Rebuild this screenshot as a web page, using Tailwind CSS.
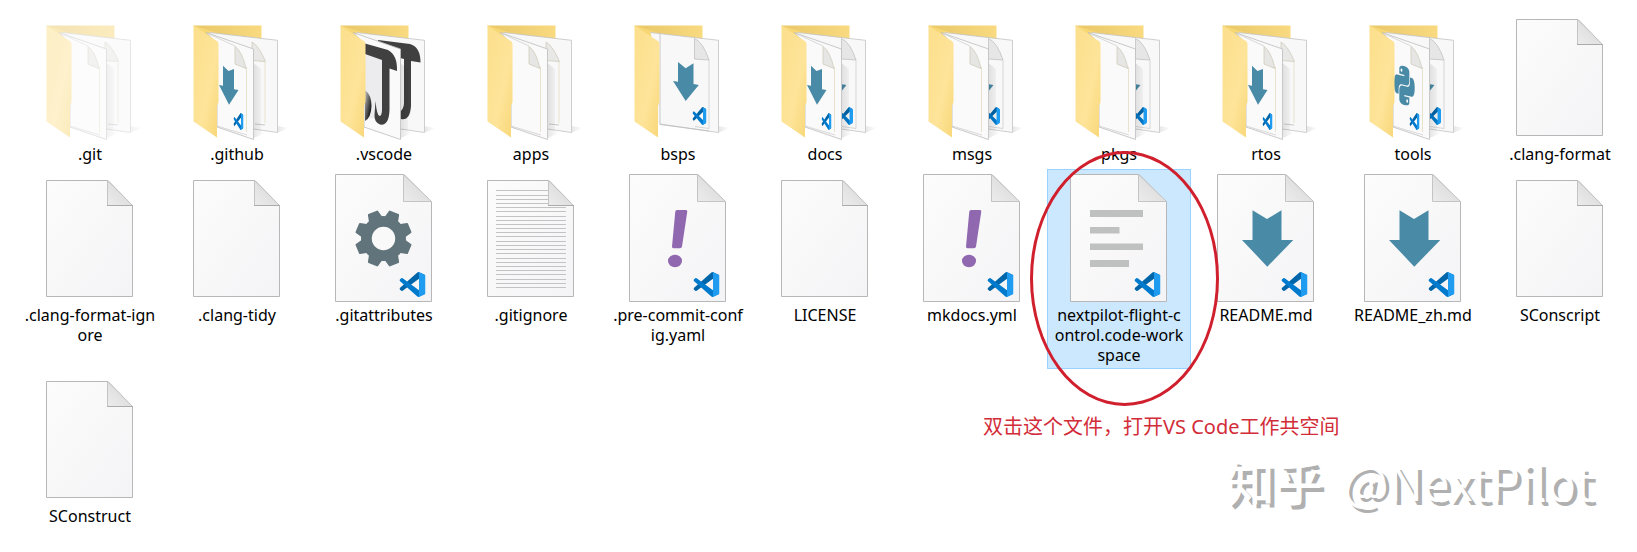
<!DOCTYPE html>
<html lang="zh-CN">
<head>
<meta charset="utf-8">
<title>nextpilot-flight-control</title>
<script src="https://cdn.jsdelivr.net/npm/@tailwindcss/browser@4"></script>
</head>
<body class="bg-white">
<svg class="absolute size-0" aria-hidden="true">
  <defs>
    <linearGradient id="paper" x1="0" y1="0" x2="1" y2="1"><stop offset="0" stop-color="#fcfcfc"/><stop offset="1" stop-color="#f4f4f6"/></linearGradient>
    <linearGradient id="curl" x1="0" y1="1" x2="0.6" y2="0.4"><stop offset="0" stop-color="#ececec"/><stop offset="1" stop-color="#dedede"/></linearGradient>
    <linearGradient id="cover" x1="0" y1="0" x2="1" y2="1"><stop offset="0" stop-color="#fbdf8c"/><stop offset="0.6" stop-color="#fee499"/><stop offset="1" stop-color="#f8d778"/></linearGradient>
    <linearGradient id="backcover" x1="0" y1="0" x2="1" y2="0"><stop offset="0" stop-color="#e9c768"/><stop offset="1" stop-color="#f9da80"/></linearGradient>
    <linearGradient id="shade" x1="0" y1="0" x2="1" y2="0"><stop offset="0" stop-color="#000" stop-opacity=".1"/><stop offset="1" stop-color="#000" stop-opacity="0"/></linearGradient>
    <linearGradient id="sphere" x1="0" y1="0" x2="1" y2="1"><stop offset="0" stop-color="#c9c9c9"/><stop offset="0.5" stop-color="#555"/><stop offset="0.8" stop-color="#111"/></linearGradient>
    <clipPath id="backclip"><path d="M81 20H105V120H81Z"/></clipPath>

    <symbol id="vs" viewBox="0 0 100 100" preserveAspectRatio="none">
      <path fill="#0065a9" d="M96.46 10.8 75.86.88a6.23 6.23 0 0 0-7.11 1.2L1.3 63.58a4.17 4.17 0 0 0 0 6.17l5.51 5a4.17 4.17 0 0 0 5.32.24L93.36 13.37c2.73-2.07 6.64-.12 6.64 3.3v-.24a6.25 6.25 0 0 0-3.54-5.63Z"/>
      <path fill="#007acc" d="m96.46 89.2-20.6 9.92a6.23 6.23 0 0 1-7.11-1.2L1.3 36.42a4.17 4.17 0 0 1 0-6.17l5.51-5a4.17 4.17 0 0 1 5.32-.24l81.23 61.62c2.73 2.07 6.64.12 6.64-3.3v.24a6.25 6.25 0 0 1-3.54 5.63Z"/>
      <path fill="#1f9cf0" d="M75.86 99.13a6.23 6.23 0 0 1-7.11-1.21c2.31 2.3 6.25.67 6.25-2.59V4.67c0-3.26-3.94-4.9-6.25-2.59a6.23 6.23 0 0 1 7.11-1.21l20.6 9.91A6.25 6.25 0 0 1 100 16.41v67.18a6.25 6.25 0 0 1-3.54 5.63l-20.6 9.91Z"/>
    </symbol>

    <symbol id="doc" viewBox="0 0 128 128">
      <path fill="url(#paper)" stroke="#b7b7b7" d="M20.500 6.500H82L106.500 31.500V122.500H20.500Z"/>
      <path fill="url(#curl)" stroke="#c4c4c4" d="M81.500 6.500V31.500H106.500Z"/>
      <path stroke="#ababab" d="M81 31.500H107"/>
    </symbol>
    <symbol id="bigdoc" viewBox="0 0 128 128">
      <path fill="url(#paper)" stroke="#b7b7b7" d="M15.500 .5H84L111.500 28V127.500H15.500Z"/>
      <path fill="url(#curl)" stroke="#c4c4c4" d="M83.500 .5V27.500H111.500Z"/>
      <use href="#vs" x="79.500" y="98" width="26" height="25"/>
    </symbol>
    <symbol id="down" viewBox="0 0 128 128"><path fill="#498ba7" d="M50.500 36.300 65 45 79.500 36.300V66H91.300L65.300 92.700 40 66H50.500Z"/></symbol>
    <symbol id="bang" viewBox="0 0 128 128">
      <path fill="#9068b0" d="M63 36H72Q73.500 36 73.300 37.500L68 72.500Q67.700 74.300 66 74.300H59.500Q57.800 74.300 58 72.500L61.300 37.500Q61.500 36 63 36Z"/>
      <ellipse cx="61" cy="87" rx="7" ry="6.200" fill="#9068b0"/>
    </symbol>

    <symbol id="fback" viewBox="0 0 128 128">
      <path fill="url(#shade)" d="M104 113 116 115 105 119.500Z"/>
      <path fill="url(#backcover)" d="M20.500 12.500H88.500V30L38 24Z"/>
      <path fill="#f7d774" d="M20.500 12.500 48 21V60H30Z"/>
      <path fill="#f8f8f9" d="M36.500 19.500 104.500 27.300V119.500L44 111V60Z"/>
      <path fill="none" stroke="#c3c3c3" stroke-width=".8" d="M36.500 19.500 104.500 27.300V119.500L46 111"/>
    </symbol>
    <symbol id="ffront" viewBox="0 0 128 128">
      <path fill="url(#shade)" d="M80.500 50 88 56V118L92 120 81 125Z"/>
      <path fill="#fafafb" stroke="#bcbcbc" stroke-width=".8" d="M33 19.500 80.500 36V126.500L44 114V30Z"/>
    </symbol>
    <symbol id="fcover" viewBox="0 0 128 128"><path fill="url(#cover)" d="M20.500 12.500 44.500 28.500Q45.500 29.500 45.500 31V89L44 93V124.500L20.500 108.500Z"/></symbol>
    <symbol id="fdoc" viewBox="0 0 128 128">
      <path fill="none" stroke="#cfcfcf" stroke-width=".8" d="M36 21 62 33M44 113 74 122"/>
      <path fill="none" stroke="#e3dcc0" stroke-width=".8" d="M73.500 54V119"/>
      <path fill="#e6e6e4" stroke="#cfcbbb" stroke-width=".8" d="M62 33.500V51L73 55.500Q69 38 62 33.500Z"/>
    </symbol>
    <symbol id="bdoc" viewBox="0 0 128 128">
      <path fill="none" stroke="#cdcdcd" stroke-width=".8" d="M95 47V115.500L81 113.500"/>
      <path fill="#e6e6e6" stroke="#c2c2c2" stroke-width=".8" d="M80.500 25.500V46L95 47Q89 29 80.500 25.500Z"/>
    </symbol>
    <symbol id="bplain" viewBox="0 0 128 128">
      <path fill="none" stroke="#e3dcc0" stroke-width=".8" d="M92 49V110"/>
      <path fill="#e8e8e6" stroke="#cfcbbb" stroke-width=".8" d="M79 29V47.500L92.500 48.500Q86 33 79 29Z"/>
      <path stroke="#bdbdbd" stroke-width=".8" d="M82 111 92 112"/>
    </symbol>
    <symbol id="bmd" viewBox="0 0 128 128">
      <use href="#bdoc"/>
      <g clip-path="url(#backclip)"><path fill="#498ba7" d="M79 71 85.500 72 79 80Z"/><use href="#vs" x="78" y="94" width="14" height="18"/></g>
    </symbol>
    <symbol id="fmd" viewBox="0 0 128 128">
      <use href="#fdoc"/>
      <path fill="#498ba7" d="M50 52.700 55.500 58 61 56V76.300L65.500 77 56 91.700 46 72 50 72.700Z"/>
      <use href="#vs" x="60.500" y="100" width="10" height="17"/>
    </symbol>
    <path id="snake" d="M14.250.18l.9.2.73.26.59.3.45.32.34.34.25.34.16.33.1.3.04.26.02.2-.01.13V8.500l-.05.63-.13.550-.21.46-.26.38-.3.31-.33.250-.35.19-.35.14-.33.1-.3.07-.26.04-.21.02H8.770l-.69.05-.59.14-.5.22-.41.27-.33.32-.27.350-.2.36-.15.370-.1.350-.07.32-.04.27-.02.21v3.060H3.170l-.21-.03-.28-.07-.32-.12-.35-.18-.36-.26-.36-.36-.35-.46-.32-.59-.28-.73-.21-.88-.14-1.050-.05-1.230.06-1.220.16-1.040.24-.87.32-.71.36-.57.4-.44.42-.33.42-.24.4-.16.36-.1.32-.05.24-.01h8.380v-.83H6.180l-.01-2.750-.02-.37.05-.34.11-.31.17-.28.250-.26.31-.23.38-.2.44-.18.51-.15.580-.12.64-.1.71-.06.77-.04.84-.02 1.270.05zm-6.300 1.980-.23.33-.08.41.08.41.23.34.33.22.41.09.41-.09.33-.22.23-.34.08-.41-.08-.41-.23-.33-.33-.22-.41-.09-.41.09z"/>
  </defs>
</svg>

<main class="grid grid-cols-11 items-start gap-y-px pt-2 pl-4 pr-1 font-['Noto_Sans','Noto_Sans_CJK_SC',sans-serif] text-base leading-5 text-black">
  <button class="ml-0.5 mr-px flex flex-col items-center gap-[3px] border border-transparent pt-1 pb-[3px]">
    <svg class="size-32 opacity-50" viewBox="0 0 128 128"><use href="#fback"/><use href="#bplain"/><use href="#ffront"/><use href="#fdoc"/><use href="#fcover"/></svg><span>.git</span>
  </button>
  <button class="ml-0.5 mr-px flex flex-col items-center gap-[3px] border border-transparent pt-1 pb-[3px]">
    <svg class="size-32" viewBox="0 0 128 128"><use href="#fback"/><use href="#bplain"/><use href="#ffront"/><use href="#fmd"/><use href="#fcover"/></svg><span>.github</span>
  </button>
  <button class="ml-0.5 mr-px flex flex-col items-center gap-[3px] border border-transparent pt-1 pb-[3px]">
    <svg class="size-32" viewBox="0 0 128 128"><use href="#fback"/>
      <path fill="#404040" d="M58 27 90 31Q100.500 34 100.500 49.500L91 48V93Q90 108 81 106Q78 105 78 100 84 97 84 90V46L60 40Z"/>
      <use href="#ffront"/>
      <path fill="#ececee" d="M45 41 62 46V104L45 106Z"/>
      <path fill="#404040" d="M45 30.500 68 37Q77.500 42 77 58L69.500 55.500V97Q69 113 60 111.500 54 109 54.500 102L55.500 88Q57 104 60 103 62 102 62 96V47L45 41Z"/>
      <path fill="url(#sphere)" d="M45 77Q51.500 82 51.500 93 51 105 45 108Z"/>
      <use href="#fcover"/></svg><span>.vscode</span>
  </button>
  <button class="ml-0.5 mr-px flex flex-col items-center gap-[3px] border border-transparent pt-1 pb-[3px]">
    <svg class="size-32" viewBox="0 0 128 128"><use href="#fback"/><use href="#bplain"/><use href="#ffront"/><use href="#fdoc"/><use href="#fcover"/></svg><span>apps</span>
  </button>
  <button class="ml-0.5 mr-px flex flex-col items-center gap-[3px] border border-transparent pt-1 pb-[3px]">
    <svg class="size-32" viewBox="0 0 128 128"><use href="#fback"/>
      <path fill="none" stroke="#bdbdbd" stroke-width=".8" d="M46 20.500V111.500L95 118"/>
      <use href="#bdoc"/>
      <path fill="#498ba7" d="M64 49 71.700 55.300 79.500 50.300V71L84.800 72 71.700 88 59 68 64 68.700Z"/>
      <use href="#vs" x="78.500" y="94" width="14" height="18"/>
      <use href="#fcover"/></svg><span>bsps</span>
  </button>
  <button class="ml-0.5 mr-px flex flex-col items-center gap-[3px] border border-transparent pt-1 pb-[3px]">
    <svg class="size-32" viewBox="0 0 128 128"><use href="#fback"/><use href="#bmd"/><use href="#ffront"/><use href="#fmd"/><use href="#fcover"/></svg><span>docs</span>
  </button>
  <button class="ml-0.5 mr-px flex flex-col items-center gap-[3px] border border-transparent pt-1 pb-[3px]">
    <svg class="size-32" viewBox="0 0 128 128"><use href="#fback"/><use href="#bmd"/><use href="#ffront"/><use href="#fdoc"/><use href="#fcover"/></svg><span>msgs</span>
  </button>
  <button class="ml-0.5 mr-px flex flex-col items-center gap-[3px] border border-transparent pt-1 pb-[3px]">
    <svg class="size-32" viewBox="0 0 128 128"><use href="#fback"/><use href="#bmd"/><use href="#ffront"/><use href="#fdoc"/><use href="#fcover"/></svg><span>pkgs</span>
  </button>
  <button class="ml-0.5 mr-px flex flex-col items-center gap-[3px] border border-transparent pt-1 pb-[3px]">
    <svg class="size-32" viewBox="0 0 128 128"><use href="#fback"/><use href="#bplain"/><use href="#ffront"/><use href="#fmd"/><use href="#fcover"/></svg><span>rtos</span>
  </button>
  <button class="ml-0.5 mr-px flex flex-col items-center gap-[3px] border border-transparent pt-1 pb-[3px]">
    <svg class="size-32" viewBox="0 0 128 128"><use href="#fback"/><use href="#bmd"/><use href="#ffront"/><use href="#fdoc"/>
      <g fill="#498ba7" fill-rule="evenodd" transform="matrix(.86 .22 0 1.620 45 50.500)"><use href="#snake"/><use href="#snake" transform="rotate(180 12 12)"/></g>
      <use href="#vs" x="60.500" y="100" width="10" height="17"/>
      <use href="#fcover"/></svg><span>tools</span>
  </button>
  <button class="ml-0.5 mr-px flex flex-col items-center gap-[3px] border border-transparent pt-1 pb-[3px]">
    <svg class="size-32"><use href="#doc"/></svg><span>.clang-format</span>
  </button>

  <button class="ml-0.5 mr-px flex flex-col items-center gap-[3px] border border-transparent pt-1 pb-[3px]">
    <svg class="size-32"><use href="#doc"/></svg><span>.clang-format-ign<br>ore</span>
  </button>
  <button class="ml-0.5 mr-px flex flex-col items-center gap-[3px] border border-transparent pt-1 pb-[3px]">
    <svg class="size-32"><use href="#doc"/></svg><span>.clang-tidy</span>
  </button>
  <button class="ml-0.5 mr-px flex flex-col items-center gap-[3px] border border-transparent pt-1 pb-[3px]">
    <svg class="size-32" viewBox="0 0 128 128"><use href="#bigdoc"/>
      <g transform="translate(63.500 64.500)">
        <g fill="#62747b" stroke="#62747b" stroke-width="2" stroke-linejoin="round">
          <path id="teeth" d="M-6-21-4.500-27.300H4.500L6-21V21L4.500 27.300H-4.500L-6 21Z" transform="rotate(22.500)"/>
          <use href="#teeth" transform="rotate(45)"/><use href="#teeth" transform="rotate(90)"/><use href="#teeth" transform="rotate(135)"/>
          <circle r="21.500"/>
        </g>
        <circle r="11.700" fill="#f9f9fa"/>
      </g></svg><span>.gitattributes</span>
  </button>
  <button class="ml-0.5 mr-px flex flex-col items-center gap-[3px] border border-transparent pt-1 pb-[3px]">
    <svg class="size-32" viewBox="0 0 128 128"><use href="#doc"/>
      <path stroke="#c2c3c4" d="M29 16.500H81M29 21.500H81M29 25.500H81M29 29.500H81M29 33.500H99M29 37.500H99M29 42.500H99M29 46.500H99M29 50.500H99M29 54.500H99M29 58.500H99M29 62.500H99M29 67.500H99M29 71.500H99M29 75.500H99M29 79.500H99M29 84.500H99M29 88.500H99M29 92.500H99M29 96.500H99M29 100.500H99M29 105.500H99M29 109.500H99M29 113.500H99"/></svg><span>.gitignore</span>
  </button>
  <button class="ml-0.5 mr-px flex flex-col items-center gap-[3px] border border-transparent pt-1 pb-[3px]">
    <svg class="size-32" viewBox="0 0 128 128"><use href="#bigdoc"/><use href="#bang"/></svg><span>.pre-commit-conf<br>ig.yaml</span>
  </button>
  <button class="ml-0.5 mr-px flex flex-col items-center gap-[3px] border border-transparent pt-1 pb-[3px]">
    <svg class="size-32"><use href="#doc"/></svg><span>LICENSE</span>
  </button>
  <button class="ml-0.5 mr-px flex flex-col items-center gap-[3px] border border-transparent pt-1 pb-[3px]">
    <svg class="size-32" viewBox="0 0 128 128"><use href="#bigdoc"/><use href="#bang"/></svg><span>mkdocs.yml</span>
  </button>
  <div class="relative ml-0.5 mr-px">
    <button class="flex w-full flex-col items-center gap-[3px] border border-[#99d1ff] bg-[#cce8ff] pt-1 pb-[3px]">
      <svg class="size-32" viewBox="0 0 128 128"><use href="#bigdoc"/><path fill="#bfc0c0" d="M35 36H88V43H35ZM35 53H64.500V59.500H35ZM35 69.500H88V76H35ZM35 86H74V93H35Z"/></svg>
      <span>nextpilot-flight-c<br>ontrol.code-work<br>space</span>
    </button>
    <div class="pointer-events-none absolute -top-[18px] -left-[17px] z-10 h-[255px] w-[189px] rounded-[50%] border-3 border-[#d0202e]"></div>
    <p class="absolute top-[244px] -left-16 z-10 text-xl leading-7 whitespace-nowrap text-[#d22c38]">双击这个文件，打开VS Code工作共空间</p>
  </div>
  <button class="ml-0.5 mr-px flex flex-col items-center gap-[3px] border border-transparent pt-1 pb-[3px]">
    <svg class="size-32" viewBox="0 0 128 128"><use href="#bigdoc"/><use href="#down"/></svg><span>README.md</span>
  </button>
  <button class="ml-0.5 mr-px flex flex-col items-center gap-[3px] border border-transparent pt-1 pb-[3px]">
    <svg class="size-32" viewBox="0 0 128 128"><use href="#bigdoc"/><use href="#down"/></svg><span>README_zh.md</span>
  </button>
  <button class="ml-0.5 mr-px flex flex-col items-center gap-[3px] border border-transparent pt-1 pb-[3px]">
    <svg class="size-32"><use href="#doc"/></svg><span>SConscript</span>
  </button>

  <button class="ml-0.5 mr-px flex flex-col items-center gap-[3px] border border-transparent pt-1 pb-[3px]">
    <svg class="size-32"><use href="#doc"/></svg><span>SConstruct</span>
  </button>
</main>
<p class="absolute right-11 bottom-12 flex items-baseline gap-5 font-['Noto_Sans_CJK_SC',sans-serif] text-5xl whitespace-nowrap text-white [text-shadow:4px_4px_0_#b0b0b0]"><span class="font-medium">知乎</span><span>@NextPilot</span></p>
</body>
</html>
